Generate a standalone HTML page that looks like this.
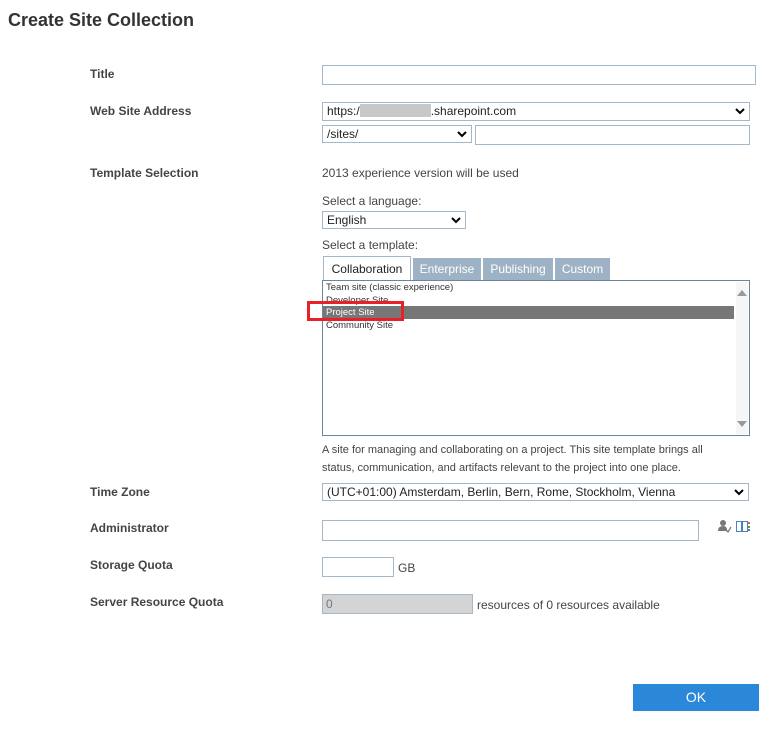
<!DOCTYPE html>
<html><head><meta charset="utf-8"><style>
body{margin:0;width:774px;height:731px;background:#fff;font-family:"Liberation Sans",sans-serif;color:#444;position:relative;overflow:hidden}
.a{position:absolute;white-space:nowrap}
.h{left:8px;top:10px;font-size:18px;font-weight:bold;color:#333}
.l{left:90px;font-size:12px;font-weight:bold;color:#444}
.t{font-size:12px;color:#444}
.in{position:absolute;border:1px solid #a6b8c7;background:#fff;box-sizing:border-box}
.sel{position:absolute;border:1px solid #a6b8c7;background:#fff;box-sizing:border-box;font-size:12px;color:#222;padding-left:4px;line-height:16px}
.sel svg{position:absolute;right:4px;top:5px}
.tab{position:absolute;top:258px;height:22px;background:#9db2c4;color:#fff;font-size:12px;line-height:22px;text-align:center}
.li{position:absolute;left:326px;font-size:9.5px;color:#333}
</style></head><body>
<div class="a h">Create Site Collection</div>
<div class="a l" style="top:67px">Title</div>
<div class="a l" style="top:104px">Web Site Address</div>
<div class="a l" style="top:166px">Template Selection</div>
<div class="a l" style="top:485px">Time Zone</div>
<div class="a l" style="top:521px">Administrator</div>
<div class="a l" style="top:558px">Storage Quota</div>
<div class="a l" style="top:595px">Server Resource Quota</div>

<div class="in" style="left:322px;top:65px;width:434px;height:20px"></div>
<div class="sel" style="left:322px;top:102px;width:428px;height:19px">https:/<span style="display:inline-block;width:71px;height:13px;background:#c8c8c8;vertical-align:-2px"></span>.sharepoint.com<svg width="10" height="7"><path d="M1 1L5 5L9 1" stroke="#000" stroke-width="2" fill="none"/></svg></div>
<div class="sel" style="left:322px;top:125px;width:150px;height:18px">/sites/<svg width="10" height="7"><path d="M1 1L5 5L9 1" stroke="#000" stroke-width="2" fill="none"/></svg></div>
<div class="in" style="left:475px;top:125px;width:275px;height:20px"></div>

<div class="a t" style="left:322px;top:166px">2013 experience version will be used</div>
<div class="a t" style="left:322px;top:194px">Select a language:</div>
<div class="sel" style="left:322px;top:211px;width:144px;height:18px">English<svg width="10" height="7"><path d="M1 1L5 5L9 1" stroke="#000" stroke-width="2" fill="none"/></svg></div>
<div class="a t" style="left:322px;top:238px">Select a template:</div>

<div class="tab" style="left:323px;top:256px;width:86px;height:24px;background:#fff;color:#222;border:1px solid #a6b8c7;border-bottom:none;line-height:24px">Collaboration</div>
<div class="tab" style="left:413px;width:68px">Enterprise</div>
<div class="tab" style="left:483px;width:70px">Publishing</div>
<div class="tab" style="left:555px;width:55px">Custom</div>

<div class="in" style="left:322px;top:280px;width:428px;height:156px;border-color:#6d8596"></div>
<div class="a" style="left:736px;top:282px;width:12px;height:152px;background:#f6f6f6"></div>
<svg class="a" style="left:737px;top:290px" width="10" height="6"><path d="M0 6L5 0L10 6Z" fill="#999"/></svg>
<svg class="a" style="left:737px;top:421px" width="10" height="6"><path d="M0 0L5 6L10 0Z" fill="#999"/></svg>
<div class="a" style="left:323px;top:306px;width:411px;height:13px;background:#777"></div>
<div class="li" style="top:282px">Team site (classic experience)</div>
<div class="li" style="top:295px">Developer Site</div>
<div class="li" style="top:307px;color:#fff">Project Site</div>
<div class="li" style="top:320px">Community Site</div>
<div class="a" style="left:307px;top:301px;width:91px;height:14px;border:3px solid #e8202a"></div>

<div class="a" style="left:322px;top:441px;font-size:11px;line-height:18px;color:#444">A site for managing and collaborating on a project. This site template brings all<br>status, communication, and artifacts relevant to the project into one place.</div>

<div class="sel" style="left:322px;top:483px;width:427px;height:18px">(UTC+01:00) Amsterdam, Berlin, Bern, Rome, Stockholm, Vienna<svg width="10" height="7"><path d="M1 1L5 5L9 1" stroke="#000" stroke-width="2" fill="none"/></svg></div>

<div class="in" style="left:322px;top:520px;width:377px;height:21px"></div>
<svg class="a" style="left:718px;top:519px" width="14" height="15"><circle cx="5" cy="4" r="3" fill="#777"/><path d="M0 12Q0 7 5 7Q9 7 9 11L9 12Z" fill="#777"/><path d="M8 11L10 13L13 8" stroke="#777" stroke-width="1.3" fill="none"/></svg>
<svg class="a" style="left:736px;top:520px" width="14" height="13"><rect x="0.5" y="1.5" width="5" height="10" fill="none" stroke="#4f81bd"/><rect x="6.5" y="1.5" width="5" height="10" fill="none" stroke="#4f81bd"/><rect x="12" y="2" width="2" height="2" fill="#e06040"/><rect x="12" y="6" width="2" height="2" fill="#4aa04a"/><rect x="12" y="9" width="2" height="2" fill="#4f81bd"/></svg>

<div class="in" style="left:322px;top:557px;width:72px;height:20px"></div>
<div class="a t" style="left:398px;top:561px">GB</div>

<div class="in" style="left:322px;top:594px;width:151px;height:20px;background:#d4d4d4;font-size:12px;color:#777;padding:2px 0 0 3px">0</div>
<div class="a t" style="left:477px;top:598px">resources of 0 resources available</div>

<div class="a" style="left:633px;top:684px;width:126px;height:27px;background:#2b88d8;color:#fff;font-size:14px;line-height:27px;text-align:center">OK</div>
</body></html>
